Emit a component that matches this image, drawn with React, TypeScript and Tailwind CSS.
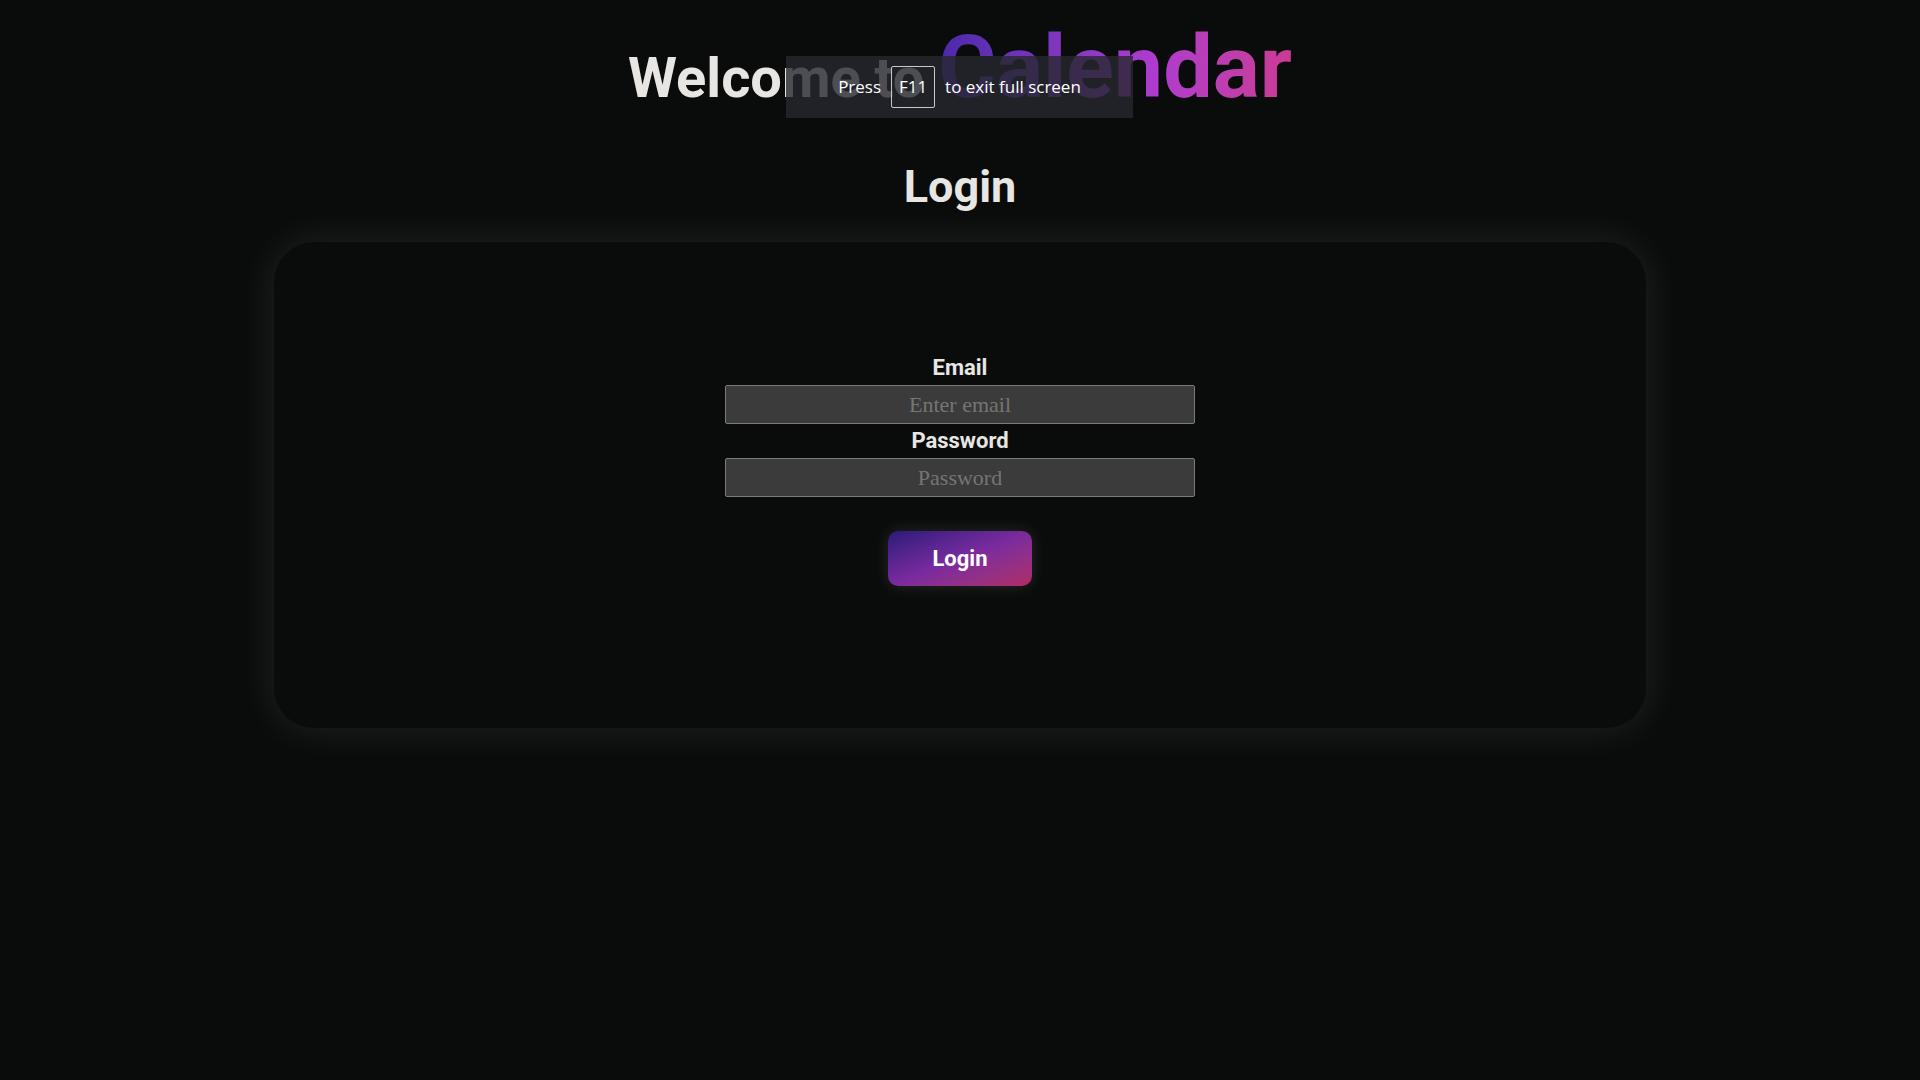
export default function App() {
  return (
    <div className="relative min-h-[1080px] w-full bg-[#0a0c0c] font-['Roboto',sans-serif] text-[#e8e6e3]">
      {/* title */}
      <h1 className="pt-[23px] text-center text-[56px] font-bold leading-none">
        Welcome to{" "}
        <span className="bg-linear-to-r from-[#4a29ab] via-[#ad3bd0] via-60% to-[#cc3a92] bg-clip-text text-[88px] text-transparent">
          Calendar
        </span>
      </h1>

      <h2 className="mt-[53px] text-center text-[45px] font-bold leading-none">Login</h2>

      {/* card */}
      <div className="mx-auto mt-[33px] h-[486px] w-[1372px] rounded-[40px] bg-[#0a0c0c] pt-[113px] shadow-[0_0_40px_rgba(255,255,255,0.1)]">
        <form className="mx-auto flex w-[470px] flex-col items-center">
          <label htmlFor="email" className="mb-1 text-[22px] font-bold leading-[26px]">
            Email
          </label>
          <input
            id="email"
            type="email"
            placeholder="Enter email"
            className="h-[39px] w-full rounded-[2px] border border-[#7a7a7a] bg-[#3b3b3b] text-center font-['Liberation_Serif',serif] text-[22px] text-[#e8e6e3] outline-none placeholder:text-[#757575]"
          />
          <label htmlFor="password" className="mt-1 mb-1 text-[22px] font-bold leading-[26px]">
            Password
          </label>
          <input
            id="password"
            type="password"
            placeholder="Password"
            className="h-[39px] w-full rounded-[2px] border border-[#7a7a7a] bg-[#3b3b3b] text-center font-['Liberation_Serif',serif] text-[22px] text-[#e8e6e3] outline-none placeholder:text-[#757575]"
          />
          <button
            type="button"
            className="mt-[34px] h-[55px] w-[144px] rounded-[10px] bg-linear-to-br from-[#2c1a78] via-[#7a2a9f] to-[#b02a66] text-[22px] font-bold text-white shadow-[0_0_16px_rgba(255,255,255,0.12)]"
          >
            Login
          </button>
        </form>
      </div>

      {/* fullscreen notice */}
      <div className="absolute top-[56px] left-[786px] flex h-[62px] w-[347px] items-center justify-center gap-[10px] bg-[rgba(38,40,46,0.8)] font-['Open_Sans',sans-serif] text-[17px] text-white">
        <span>Press</span>
        <span className="flex h-[42px] w-[44px] items-center justify-center rounded-[2px] border border-[#c8c8c8]">F11</span>
        <span>to exit full screen</span>
      </div>
    </div>
  );
}
